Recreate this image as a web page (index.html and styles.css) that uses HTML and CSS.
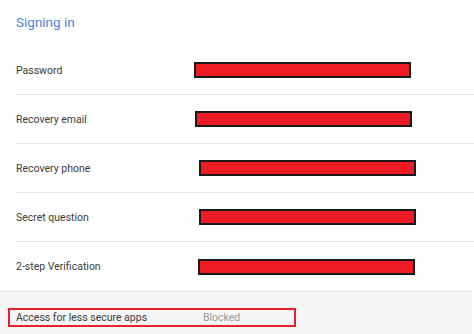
FILE: index.html
```html
<!DOCTYPE html>
<html lang="en">
<head>
  <meta charset="UTF-8">
  <title>Signing in</title>
  <meta name="viewport" content="width=device-width, initial-scale=1.0">
  <link rel="stylesheet" href="styles.css">
</head>
<body>
  <section class="card">
    <h2>Signing in</h2>
    <div class="rows">
      <div class="row">
        <span class="label">Password</span>
        <span class="redact"></span>
      </div>
      <div class="row">
        <span class="label">Recovery email</span>
        <span class="redact"></span>
      </div>
      <div class="row">
        <span class="label">Recovery phone</span>
        <span class="redact"></span>
      </div>
      <div class="row">
        <span class="label">Secret question</span>
        <span class="redact"></span>
      </div>
      <div class="row">
        <span class="label">2-step Verification</span>
        <span class="redact"></span>
      </div>
    </div>
  </section>
  <footer class="less-secure">
    <div class="highlight">
      <span class="label">Access for less secure apps</span>
      <span class="status">Blocked</span>
    </div>
  </footer>
</body>
</html>
```

FILE: styles.css
```css
* {
  margin: 0;
  padding: 0;
  box-sizing: border-box;
}
body {
  background: #fff;
  font-family: Roboto, 'Liberation Sans', sans-serif;
  width: 474px;
  height: 334px;
  overflow: hidden;
}
.card {
  padding-left: 16px;
}
.card h2 {
  color: #4d7fe6;
  font-size: 13.5px;
  font-weight: 400;
  line-height: 20px;
  padding-top: 12px;
  height: 46px;
}
.row {
  display: flex;
  align-items: center;
  height: 49px;
  border-bottom: 1px solid #e6e6e6;
}
.row:last-child {
  border-bottom: none;
  height: 49px;
}
.label {
  color: #3c3c3c;
  font-size: 10.5px;
  width: 178px;
  flex-shrink: 0;
}
/* redaction bars drawn over the values */
.redact {
  display: block;
  width: 217px;
  height: 16px;
  background: #ed1c24;
  border: 2px solid #1a1a1a;
}
.row:nth-child(2) .redact { margin-left: 1px; }
.row:nth-child(3) .redact { margin-left: 5px; }
.row:nth-child(4) .redact { margin-left: 5px; }
.row:nth-child(5) .redact { margin-left: 4px; }
.less-secure {
  background: #f5f5f5;
  height: 44px;
  width: 472px;
  border-top: 1px solid #e6e6e6;
  padding-top: 16px;
  padding-left: 8px;
}
.highlight {
  display: flex;
  align-items: center;
  width: 288px;
  height: 19px;
  border: 2px solid #e3222c;
  padding-left: 6px;
}
.highlight .label {
  width: 187px;
}
.status {
  color: #9a9a9a;
  font-size: 10.5px;
}
```
